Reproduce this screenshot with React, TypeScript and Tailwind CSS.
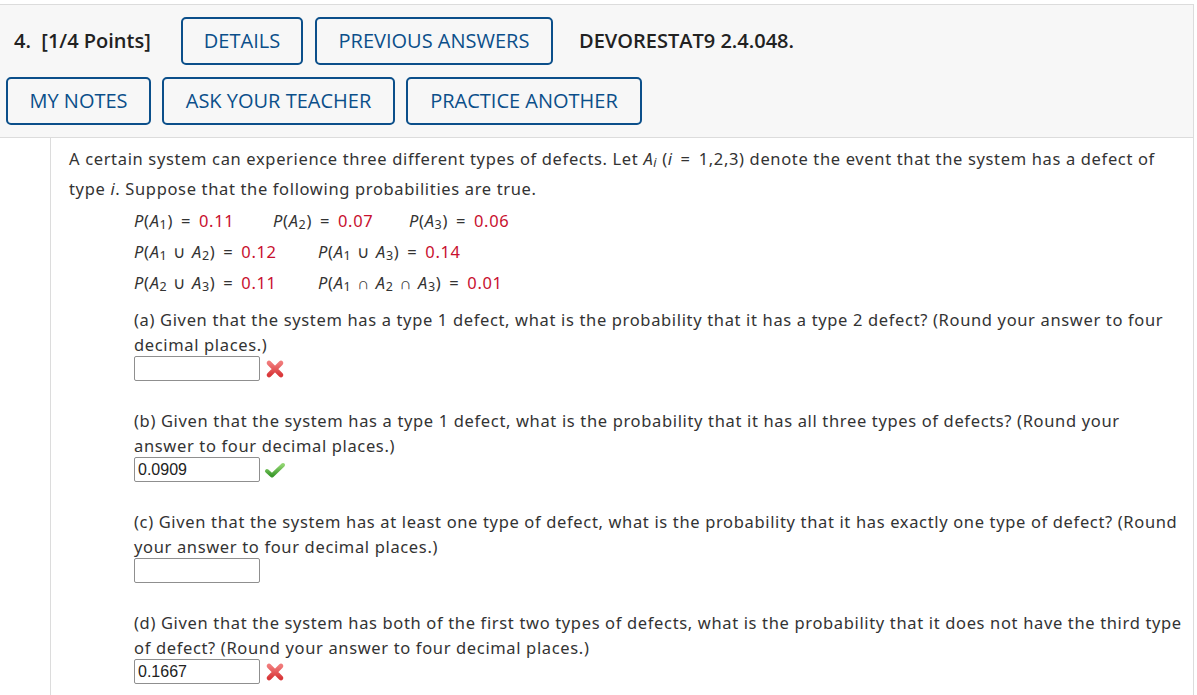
import type { ReactNode } from 'react';

function Btn({ label, w }: { label: string; w: string }) {
  return (
    <div
      className={`${w} flex h-[48px] shrink-0 items-center justify-center rounded-[5px] border-2 border-[#0b4f8a] text-[20px] text-[#0b4f8a]`}
    >
      {label}
    </div>
  );
}

function A({ n }: { n: string }) {
  return (
    <>
      <i>A</i>
      <sub className={`relative top-[2px] text-[12.5px] ${n === 'i' ? 'italic' : 'not-italic'}`}>{n}</sub>
    </>
  );
}

function V({ children }: { children: ReactNode }) {
  return <span className="text-[#c8102e]">{children}</span>;
}

const Eq = () => <> <span className="mx-[3px]">=</span> </>;
const Cup = () => <> <span className="mx-[1px]">∪</span> </>;
const Cap = () => <> <span className="mx-[1px]">∩</span> </>;

function Cross() {
  return (
    <svg width="20" height="20" viewBox="0 0 20 20" className="ml-[5px]">
      <defs>
        <linearGradient id="rx" x1="0" y1="0" x2="0" y2="1">
          <stop offset="0" stopColor="#f07a7a" />
          <stop offset="1" stopColor="#d9383a" />
        </linearGradient>
      </defs>
      <path
        d="M4 4 L16 16 M16 4 L4 16"
        stroke="url(#rx)"
        strokeWidth="4.6"
        strokeLinecap="round"
        fill="none"
      />
    </svg>
  );
}

function Check() {
  return (
    <svg width="22" height="20" viewBox="0 0 22 20" className="ml-[4px]">
      <defs>
        <linearGradient id="gc" x1="0" y1="0" x2="0" y2="1">
          <stop offset="0" stopColor="#8fd46f" />
          <stop offset="1" stopColor="#3c9a2d" />
        </linearGradient>
      </defs>
      <path
        d="M3 11 L8 15.5 L19 5"
        stroke="url(#gc)"
        strokeWidth="4"
        strokeLinecap="round"
        strokeLinejoin="round"
        fill="none"
      />
    </svg>
  );
}

function Answer({ value, mark }: { value?: string; mark?: 'x' | 'ok' }) {
  return (
    <div className="flex h-[25px] items-center">
      <div className="flex h-[25px] w-[126px] items-center rounded-[2px] border border-[#8f8f8f] pl-[3px] font-['Liberation_Sans',Arial,sans-serif] text-[16px] tracking-normal text-[#222]">
        {value}
      </div>
      {mark === 'x' && <Cross />}
      {mark === 'ok' && <Check />}
    </div>
  );
}

function Part({ children, value, mark }: { children: ReactNode; value?: string; mark?: 'x' | 'ok' }) {
  return (
    <div className="mt-[27px] first:mt-0">
      <p className="leading-[25px] whitespace-nowrap">{children}</p>
      <div className="-mt-[1px]">
        <Answer value={value} mark={mark} />
      </div>
    </div>
  );
}

export default function App() {
  return (
    <div className="min-h-[695px] bg-white pt-[4px]">
      <div className="w-[1194px] border-t border-r border-[#dcdcdc]">
        <header className="border-b border-[#dcdcdc] bg-[#f7f7f7] px-[6px] py-[12px] font-['Open_Sans',sans-serif]">
          <div className="flex items-center">
            <span className="ml-[8px] w-[167px] whitespace-pre text-[20px] font-semibold text-[#222]">
              {'4.  [1/4 Points]'}
            </span>
            <div className="flex gap-[12px]">
              <Btn label="DETAILS" w="w-[122px]" />
              <Btn label="PREVIOUS ANSWERS" w="w-[238px]" />
            </div>
            <span className="ml-[26px] text-[20px] font-semibold text-[#222]">DEVORESTAT9 2.4.048.</span>
          </div>
          <div className="mt-[12px] flex gap-[11px]">
            <Btn label="MY NOTES" w="w-[145px]" />
            <Btn label="ASK YOUR TEACHER" w="w-[233px]" />
            <Btn label="PRACTICE ANOTHER" w="w-[236px]" />
          </div>
        </header>
        <div className="ml-[50px] min-h-[560px] overflow-hidden border-l border-[#dcdcdc] pl-[18px] pr-[10px] pt-[6px] font-['Noto_Sans',sans-serif] text-[16.5px] tracking-[0.65px] text-[#333]">
          <p className="leading-[30px] whitespace-nowrap">
            A certain system can experience three different types of defects. Let <A n="i" /> (<i>i</i><Eq />1,2,3) denote the
            event that the system has a defect of
            <br />
            type <i>i</i>. Suppose that the following probabilities are true.
          </p>
          <div className="mt-[2px] pl-[65px]">
            <div className="flex h-[31px] items-center">
              <span className="w-[139px]"><i>P</i>(<A n="1" />)<Eq /><V>0.11</V></span>
              <span className="w-[136px]"><i>P</i>(<A n="2" />)<Eq /><V>0.07</V></span>
              <span><i>P</i>(<A n="3" />)<Eq /><V>0.06</V></span>
            </div>
            <div className="flex h-[31px] items-center">
              <span className="w-[184px]"><i>P</i>(<A n="1" /><Cup /><A n="2" />)<Eq /><V>0.12</V></span>
              <span><i>P</i>(<A n="1" /><Cup /><A n="3" />)<Eq /><V>0.14</V></span>
            </div>
            <div className="flex h-[31px] items-center">
              <span className="w-[184px]"><i>P</i>(<A n="2" /><Cup /><A n="3" />)<Eq /><V>0.11</V></span>
              <span><i>P</i>(<A n="1" /><Cap /><A n="2" /><Cap /><A n="3" />)<Eq /><V>0.01</V></span>
            </div>
            <div className="mt-[8px]">
              <Part mark="x">
                (a) Given that the system has a type 1 defect, what is the probability that it has a type 2 defect? (Round your answer to four
                <br />
                decimal places.)
              </Part>
              <Part value="0.0909" mark="ok">
                (b) Given that the system has a type 1 defect, what is the probability that it has all three types of defects? (Round your
                <br />
                answer to four decimal places.)
              </Part>
              <Part>
                (c) Given that the system has at least one type of defect, what is the probability that it has exactly one type of defect? (Round
                <br />
                your answer to four decimal places.)
              </Part>
              <Part value="0.1667" mark="x">
                (d) Given that the system has both of the first two types of defects, what is the probability that it does not have the third type
                <br />
                of defect? (Round your answer to four decimal places.)
              </Part>
            </div>
          </div>
        </div>
      </div>
    </div>
  );
}
